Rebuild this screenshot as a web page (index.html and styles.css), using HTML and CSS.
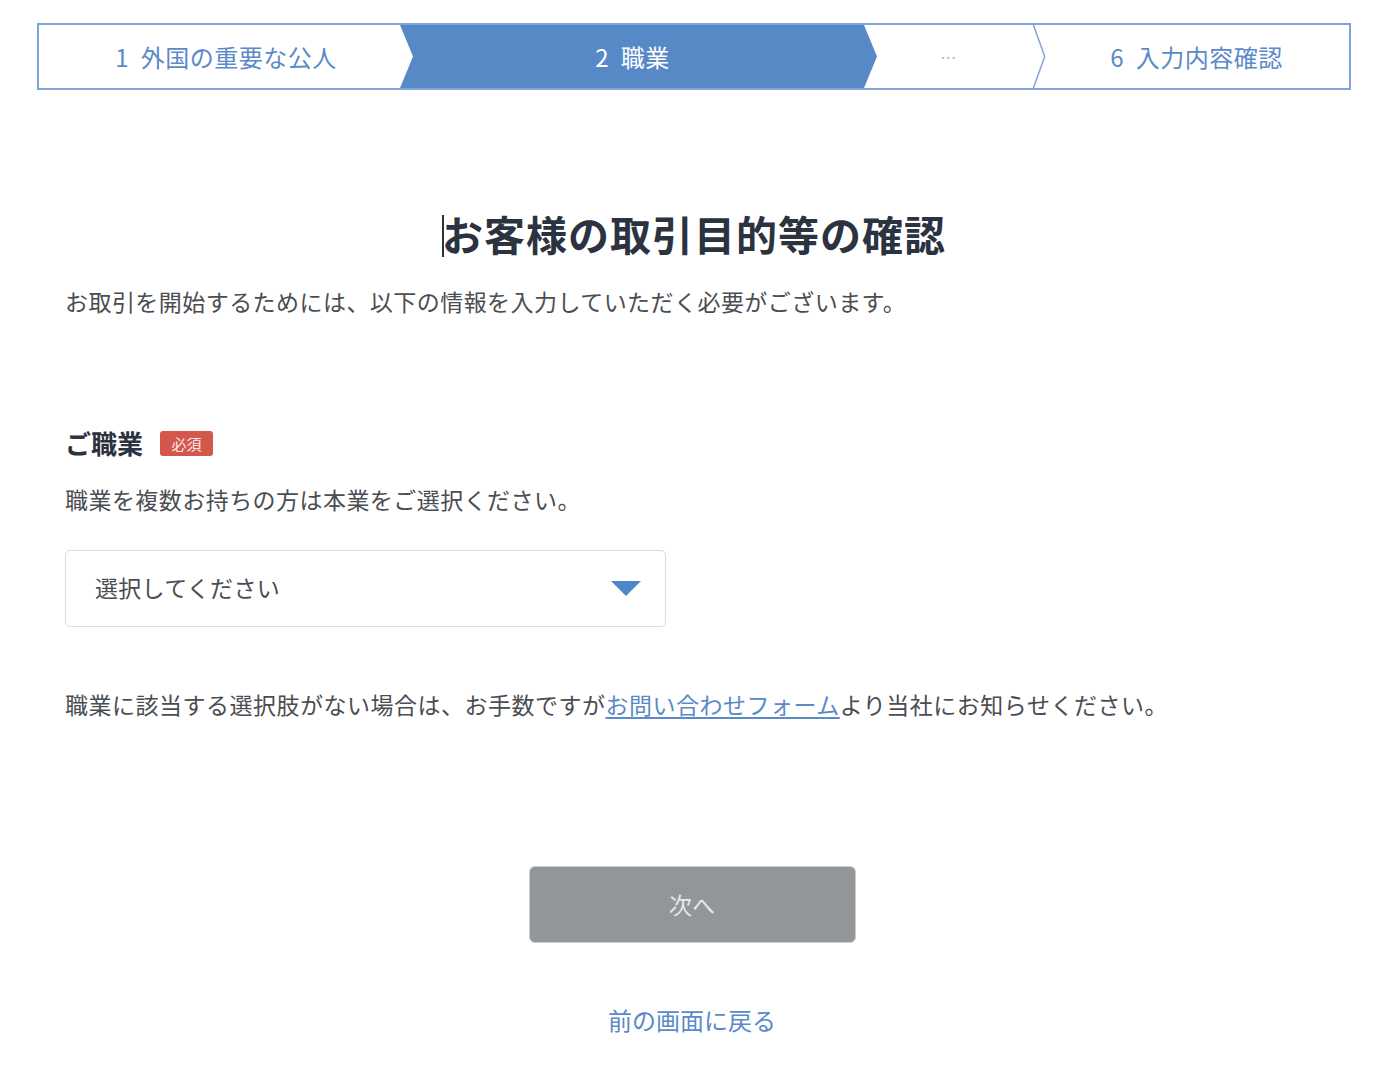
FILE: index.html
```html
<!DOCTYPE html>
<html lang="ja">
<head>
<meta charset="utf-8">
<title>お客様の取引目的等の確認</title>
<link rel="stylesheet" href="styles.css">
</head>
<body>
<div class="page">
  <nav class="stepper">
    <div class="step step-1"><span>1 外国の重要な公人</span></div>
    <div class="step step-2"><span>2 職業</span></div>
    <div class="step step-3"><span>…</span></div>
    <div class="step step-4"><svg class="divider" width="16" height="67" viewBox="0 0 16 67" aria-hidden="true"><polyline points="1,0 13,33.5 1,67" fill="none" stroke="#7fa5d8" stroke-width="1.6"/></svg><span>6 入力内容確認</span></div>
  </nav>

  <main class="main">
    <h1 class="title"><span class="caret"></span>お客様の取引目的等の確認</h1>
    <p class="lead">お取引を開始するためには、以下の情報を入力していただく必要がございます。</p>

    <div class="field-label">
      <span class="label-text">ご職業</span>
      <span class="badge">必須</span>
    </div>
    <p class="help">職業を複数お持ちの方は本業をご選択ください。</p>

    <div class="select">
      <span class="select-text">選択してください</span>
      <svg class="select-arrow" width="30" height="15" viewBox="0 0 30 15" aria-hidden="true">
        <polygon points="0,0 30,0 15,15" fill="#4f86c8"/>
      </svg>
    </div>

    <p class="notice">職業に該当する選択肢がない場合は、お手数ですが<a class="link" href="#">お問い合わせフォーム</a>より当社にお知らせください。</p>

    <div class="actions">
      <button class="btn-next" type="button">次へ</button>
      <a class="back" href="#">前の画面に戻る</a>
    </div>
  </main>
</div>
</body>
</html>
```

FILE: styles.css
```css
* { box-sizing: border-box; }

html, body {
  margin: 0;
  padding: 0;
  background: #ffffff;
}

body {
  font-family: "Noto Sans CJK JP", "Noto Sans", sans-serif;
  color: #4a4d52;
}

.page {
  width: 1384px;
  padding: 23px 33px 0 37px;
}

/* Stepper */
.stepper {
  display: flex;
  height: 67px;
  border: 2px solid #7fa5d8;
  background: #ffffff;
  overflow: hidden;
}

.step {
  display: flex;
  align-items: center;
  justify-content: center;
  font-size: 24px;
  line-height: 1;
  letter-spacing: 0.5px;
  word-spacing: 6px;
  color: #5b8ac8;
  height: 100%;
  white-space: nowrap;
}

.step-1 {
  width: 374px;
}

.step-2 {
  width: 477px;
  margin-left: -13px;
  background: #5889c7;
  color: #ffffff;
  clip-path: polygon(0 0, 464px 0, 477px 50%, 464px 100%, 0 100%, 13px 50%);
  padding-right: 12px;
}

.step-3 {
  width: 167px;
  margin-left: -12px;
  color: #a9bcd6;
  font-size: 16px;
}

.step-4 {
  position: relative;
  flex: 1;
  padding-left: 12px;
}

.divider {
  position: absolute;
  left: 0;
  top: 0;
  height: 100%;
}

/* Main */
.main {
  padding: 0 28px;
}

.title {
  margin: 119px 0 0;
  text-align: center;
  font-size: 41px;
  line-height: 48px;
  font-weight: 700;
  color: #2b3240;
  letter-spacing: 1px;
}

.caret {
  display: inline-block;
  width: 2px;
  height: 42px;
  background: #2b3240;
  vertical-align: -6px;
  margin-right: -2px;
}

.lead {
  margin: 27px 0 0;
  font-size: 23px;
  line-height: 34px;
  letter-spacing: 0.45px;
  color: #4a4d52;
}

.field-label {
  display: flex;
  align-items: center;
  margin-top: 108px;
  height: 34px;
}

.label-text {
  font-size: 26px;
  font-weight: 700;
  color: #2b3240;
  line-height: 34px;
}

.badge {
  margin-left: 17px;
  width: 53px;
  height: 25px;
  border-radius: 3px;
  background: #d4574e;
  color: #fbe9e7;
  font-size: 15px;
  line-height: 25px;
  text-align: center;
}

.help {
  margin: 22px 0 0;
  font-size: 23px;
  line-height: 34px;
  letter-spacing: 0.45px;
  color: #4a4d52;
}

.select {
  margin-top: 34px;
  width: 601px;
  height: 77px;
  border: 1.5px solid #dcdcdc;
  border-radius: 5px;
  display: flex;
  align-items: center;
  justify-content: space-between;
  padding: 0 24px 4px 29px;
  background: #ffffff;
}

.select-arrow {
  margin-top: 4px;
}

.select-text {
  font-size: 23px;
  letter-spacing: 0.3px;
  color: #4a4d52;
}

.notice {
  margin: 60px 0 0;
  font-size: 23px;
  line-height: 34px;
  letter-spacing: 0.5px;
  color: #4a4d52;
  white-space: nowrap;
}

.link {
  color: #5b8ac8;
  text-decoration: underline;
  text-underline-offset: 3px;
}

.actions {
  display: flex;
  flex-direction: column;
  align-items: center;
  margin-left: -65px;
  width: 1384px;
}

.btn-next {
  margin-top: 145px;
  width: 327px;
  height: 77px;
  border: 1px solid #c9cbcd;
  border-radius: 6px;
  background: #939699;
  color: #e8e8e8;
  font-family: "Noto Sans CJK JP", sans-serif;
  font-size: 23px;
  padding-bottom: 3px;
}

.back {
  margin-top: 60px;
  font-size: 24px;
  line-height: 34px;
  color: #5b8ac8;
  text-decoration: none;
}
```
